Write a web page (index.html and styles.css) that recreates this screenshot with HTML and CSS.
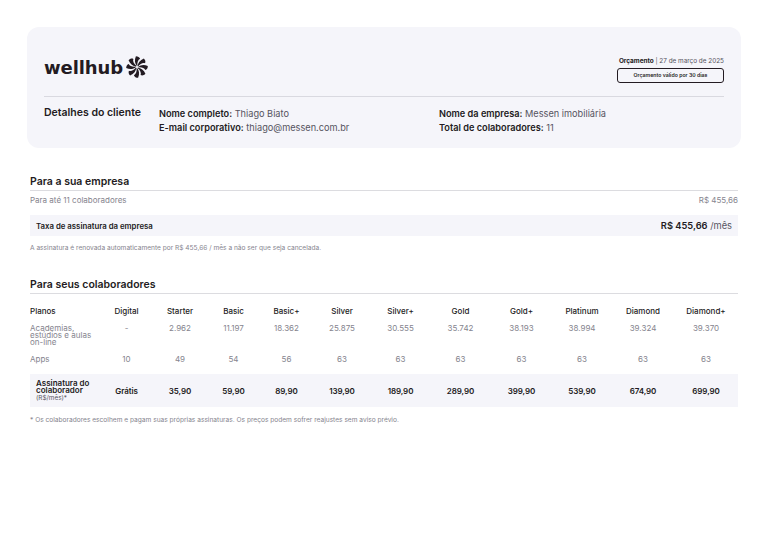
FILE: index.html
```html
<!DOCTYPE html>
<html lang="pt-BR">
<head>
    <meta charset="UTF-8">
    <title>Orçamento Wellhub</title>
    <link rel="stylesheet" href="styles.css">
</head>
<body>
    <div class="card">
        <div class="card-top">
            <div class="logo">
                <span class="logo-text">wellhub</span>
                <svg class="logo-icon" viewBox="-12 -12 24 24">
                    <defs>
                        <path id="blade" d="M0 -1.2 C-2.4 -3.8 -3 -7.6 -1.2 -11.8 C1 -11.8 2.8 -10.8 3.4 -9 C1 -8 0 -4.8 0.5 -1.2 Z"/>
                    </defs>
                    <use href="#blade"/>
                    <use href="#blade" transform="rotate(45)"/>
                    <use href="#blade" transform="rotate(90)"/>
                    <use href="#blade" transform="rotate(135)"/>
                    <use href="#blade" transform="rotate(180)"/>
                    <use href="#blade" transform="rotate(225)"/>
                    <use href="#blade" transform="rotate(270)"/>
                    <use href="#blade" transform="rotate(315)"/>
                </svg>
            </div>
            <div class="quote">
                <p class="quote-date"><b>Orçamento</b> | 27 de março de 2025</p>
                <div class="quote-badge">Orçamento válido por 30 dias</div>
            </div>
        </div>
        <div class="details">
            <h2 class="details-title">Detalhes do cliente</h2>
            <div class="details-col col-left">
                <p><b>Nome completo:</b> Thiago Biato</p>
                <p><b>E-mail corporativo:</b> thiago@messen.com.br</p>
            </div>
            <div class="details-col">
                <p><b>Nome da empresa:</b> Messen imobiliária</p>
                <p><b>Total de colaboradores:</b> 11</p>
            </div>
        </div>
    </div>

    <div class="section section-company">
        <h2 class="section-title">Para a sua empresa</h2>
        <div class="line-row">
            <span>Para até 11 colaboradores</span>
            <span>R$ 455,66</span>
        </div>
        <div class="fee-row">
            <b>Taxa de assinatura da empresa</b>
            <span class="fee-price"><b>R$ 455,66</b> /mês</span>
        </div>
        <p class="small-note">A assinatura é renovada automaticamente por R$ 455,66 / mês a não ser que seja cancelada.</p>
    </div>

    <div class="section section-plans">
        <h2 class="section-title">Para seus colaboradores</h2>
        <table class="plans">
            <colgroup>
                <col class="c-first">
                <col class="c-53"><col class="c-54"><col class="c-53"><col class="c-53">
                <col class="c-58"><col class="c-59"><col class="c-61"><col class="c-61">
                <col class="c-60"><col class="c-62"><col class="c-64">
            </colgroup>
            <tr class="row-head">
                <th>Planos</th><th>Digital</th><th>Starter</th><th>Basic</th><th>Basic+</th><th>Silver</th>
                <th>Silver+</th><th>Gold</th><th>Gold+</th><th>Platinum</th><th>Diamond</th><th>Diamond+</th>
            </tr>
            <tr class="row-gyms">
                <td>Academias, estúdios e aulas on-line</td><td>-</td><td>2.962</td><td>11.197</td><td>18.362</td><td>25.875</td>
                <td>30.555</td><td>35.742</td><td>38.193</td><td>38.994</td><td>39.324</td><td>39.370</td>
            </tr>
            <tr class="row-apps">
                <td>Apps</td><td>10</td><td>49</td><td>54</td><td>56</td><td>63</td>
                <td>63</td><td>63</td><td>63</td><td>63</td><td>63</td><td>63</td>
            </tr>
            <tr class="row-price">
                <td><b>Assinatura do colaborador</b><span>(R$/mês)*</span></td><td>Grátis</td><td>35,90</td><td>59,90</td><td>89,90</td><td>139,90</td>
                <td>189,90</td><td>289,90</td><td>399,90</td><td>539,90</td><td>674,90</td><td>699,90</td>
            </tr>
        </table>
        <p class="small-note foot-note">* Os colaboradores escolhem e pagam suas próprias assinaturas. Os preços podem sofrer reajustes sem aviso prévio.</p>
    </div>
</body>
</html>
```

FILE: styles.css
```css
body {
    font-family: Inter, "Liberation Sans", sans-serif;
    margin: 0;
    padding: 27px 0 0;
    background-color: #fff;
    color: #1f1e2b;
    overflow: hidden;
}

p, h2 {
    margin: 0;
}

.card {
    width: 680px;
    height: 121px;
    margin-left: 27px;
    padding: 0 17px;
    background-color: #f5f5fa;
    border-radius: 12px;
}

.card-top {
    display: flex;
    justify-content: space-between;
    align-items: center;
    height: 70px;
    padding-top: 11px;
    box-sizing: border-box;
    border-bottom: 1px solid #d9d9e0;
}

.logo {
    display: flex;
    align-items: center;
    gap: 3px;
}

.logo-text {
    font-family: "DejaVu Sans", sans-serif;
    font-size: 18px;
    font-weight: 700;
    letter-spacing: -0.1px;
    color: #231b22;
}

.logo-icon {
    width: 22px;
    height: 22px;
    fill: #231b22;
}

.quote {
    width: 107px;
    margin-top: 5px;
}

.quote-date {
    font-size: 6.4px;
    line-height: 8px;
    color: #55545f;
    white-space: nowrap;
    text-align: right;
}

.quote-date b {
    color: #231b22;
}

.quote-badge {
    margin-top: 3px;
    height: 13px;
    line-height: 13px;
    border: 1px solid #231b22;
    border-radius: 3px;
    font-size: 5.2px;
    font-weight: 600;
    text-align: center;
    color: #231b22;
}

.details {
    display: flex;
    padding-top: 9px;
}

.details-title {
    width: 115px;
    font-size: 10.5px;
    line-height: 14px;
    font-weight: 600;
    color: #231b22;
}

.details-col {
    padding-top: 1px;
    font-size: 9.2px;
    line-height: 14px;
    color: #55545f;
}

.details-col b {
    font-weight: 600;
    color: #231b22;
}

.col-left {
    width: 280px;
}

.section {
    width: 708px;
    margin-left: 30px;
}

.section-company {
    margin-top: 27px;
}

.section-plans {
    margin-top: 26px;
}

.section-title {
    font-size: 10.5px;
    line-height: 14px;
    font-weight: 600;
    padding-bottom: 1px;
    border-bottom: 1px solid #dcdce0;
    color: #231b22;
}

.line-row {
    display: flex;
    justify-content: space-between;
    font-size: 8px;
    line-height: 10px;
    margin-top: 4px;
    color: #85848e;
}

.fee-row {
    display: flex;
    justify-content: space-between;
    align-items: center;
    height: 21px;
    margin-top: 10px;
    padding: 0 6px;
    background-color: #f5f5fa;
    font-size: 7.8px;
}

.fee-row b {
    font-weight: 600;
    color: #231b22;
}

.fee-price {
    font-size: 9.3px;
    color: #55545f;
}

.small-note {
    margin-top: 8px;
    font-size: 6.6px;
    line-height: 8px;
    color: #85848e;
}

.plans {
    width: 708px;
    margin-top: 7px;
    table-layout: fixed;
    border-collapse: collapse;
    font-size: 8px;
}

.c-first { width: 70px; }
.c-53 { width: 53px; }
.c-54 { width: 54px; }
.c-58 { width: 58px; }
.c-59 { width: 59px; }
.c-60 { width: 60px; }
.c-61 { width: 61px; }
.c-62 { width: 62px; }
.c-64 { width: 64px; }

.plans th,
.plans td {
    box-sizing: border-box;
    padding: 0;
    text-align: center;
}

.plans th:first-child,
.plans td:first-child {
    text-align: left;
}

.plans th {
    font-weight: 500;
    height: 20px;
    color: #231b22;
}

.row-gyms td,
.row-apps td {
    color: #85848e;
}

.row-gyms td {
    vertical-align: top;
    height: 26px;
    padding-top: 2px;
}

.row-gyms td:first-child {
    line-height: 7px;
    padding-top: 4px;
}

.row-apps td {
    height: 27px;
    padding-bottom: 3px;
}

.row-price td {
    height: 33px;
    background-color: #f5f5fa;
    font-weight: 600;
    letter-spacing: -0.1px;
    color: #231b22;
}

.row-price td:first-child {
    padding-left: 6px;
    line-height: 7px;
    letter-spacing: 0;
}

.row-price b {
    display: block;
    font-weight: 600;
}

.row-price span {
    display: block;
    font-size: 6.4px;
    line-height: 8px;
    font-weight: 400;
    color: #55545f;
}

.foot-note {
    margin-top: 9px;
}
```
